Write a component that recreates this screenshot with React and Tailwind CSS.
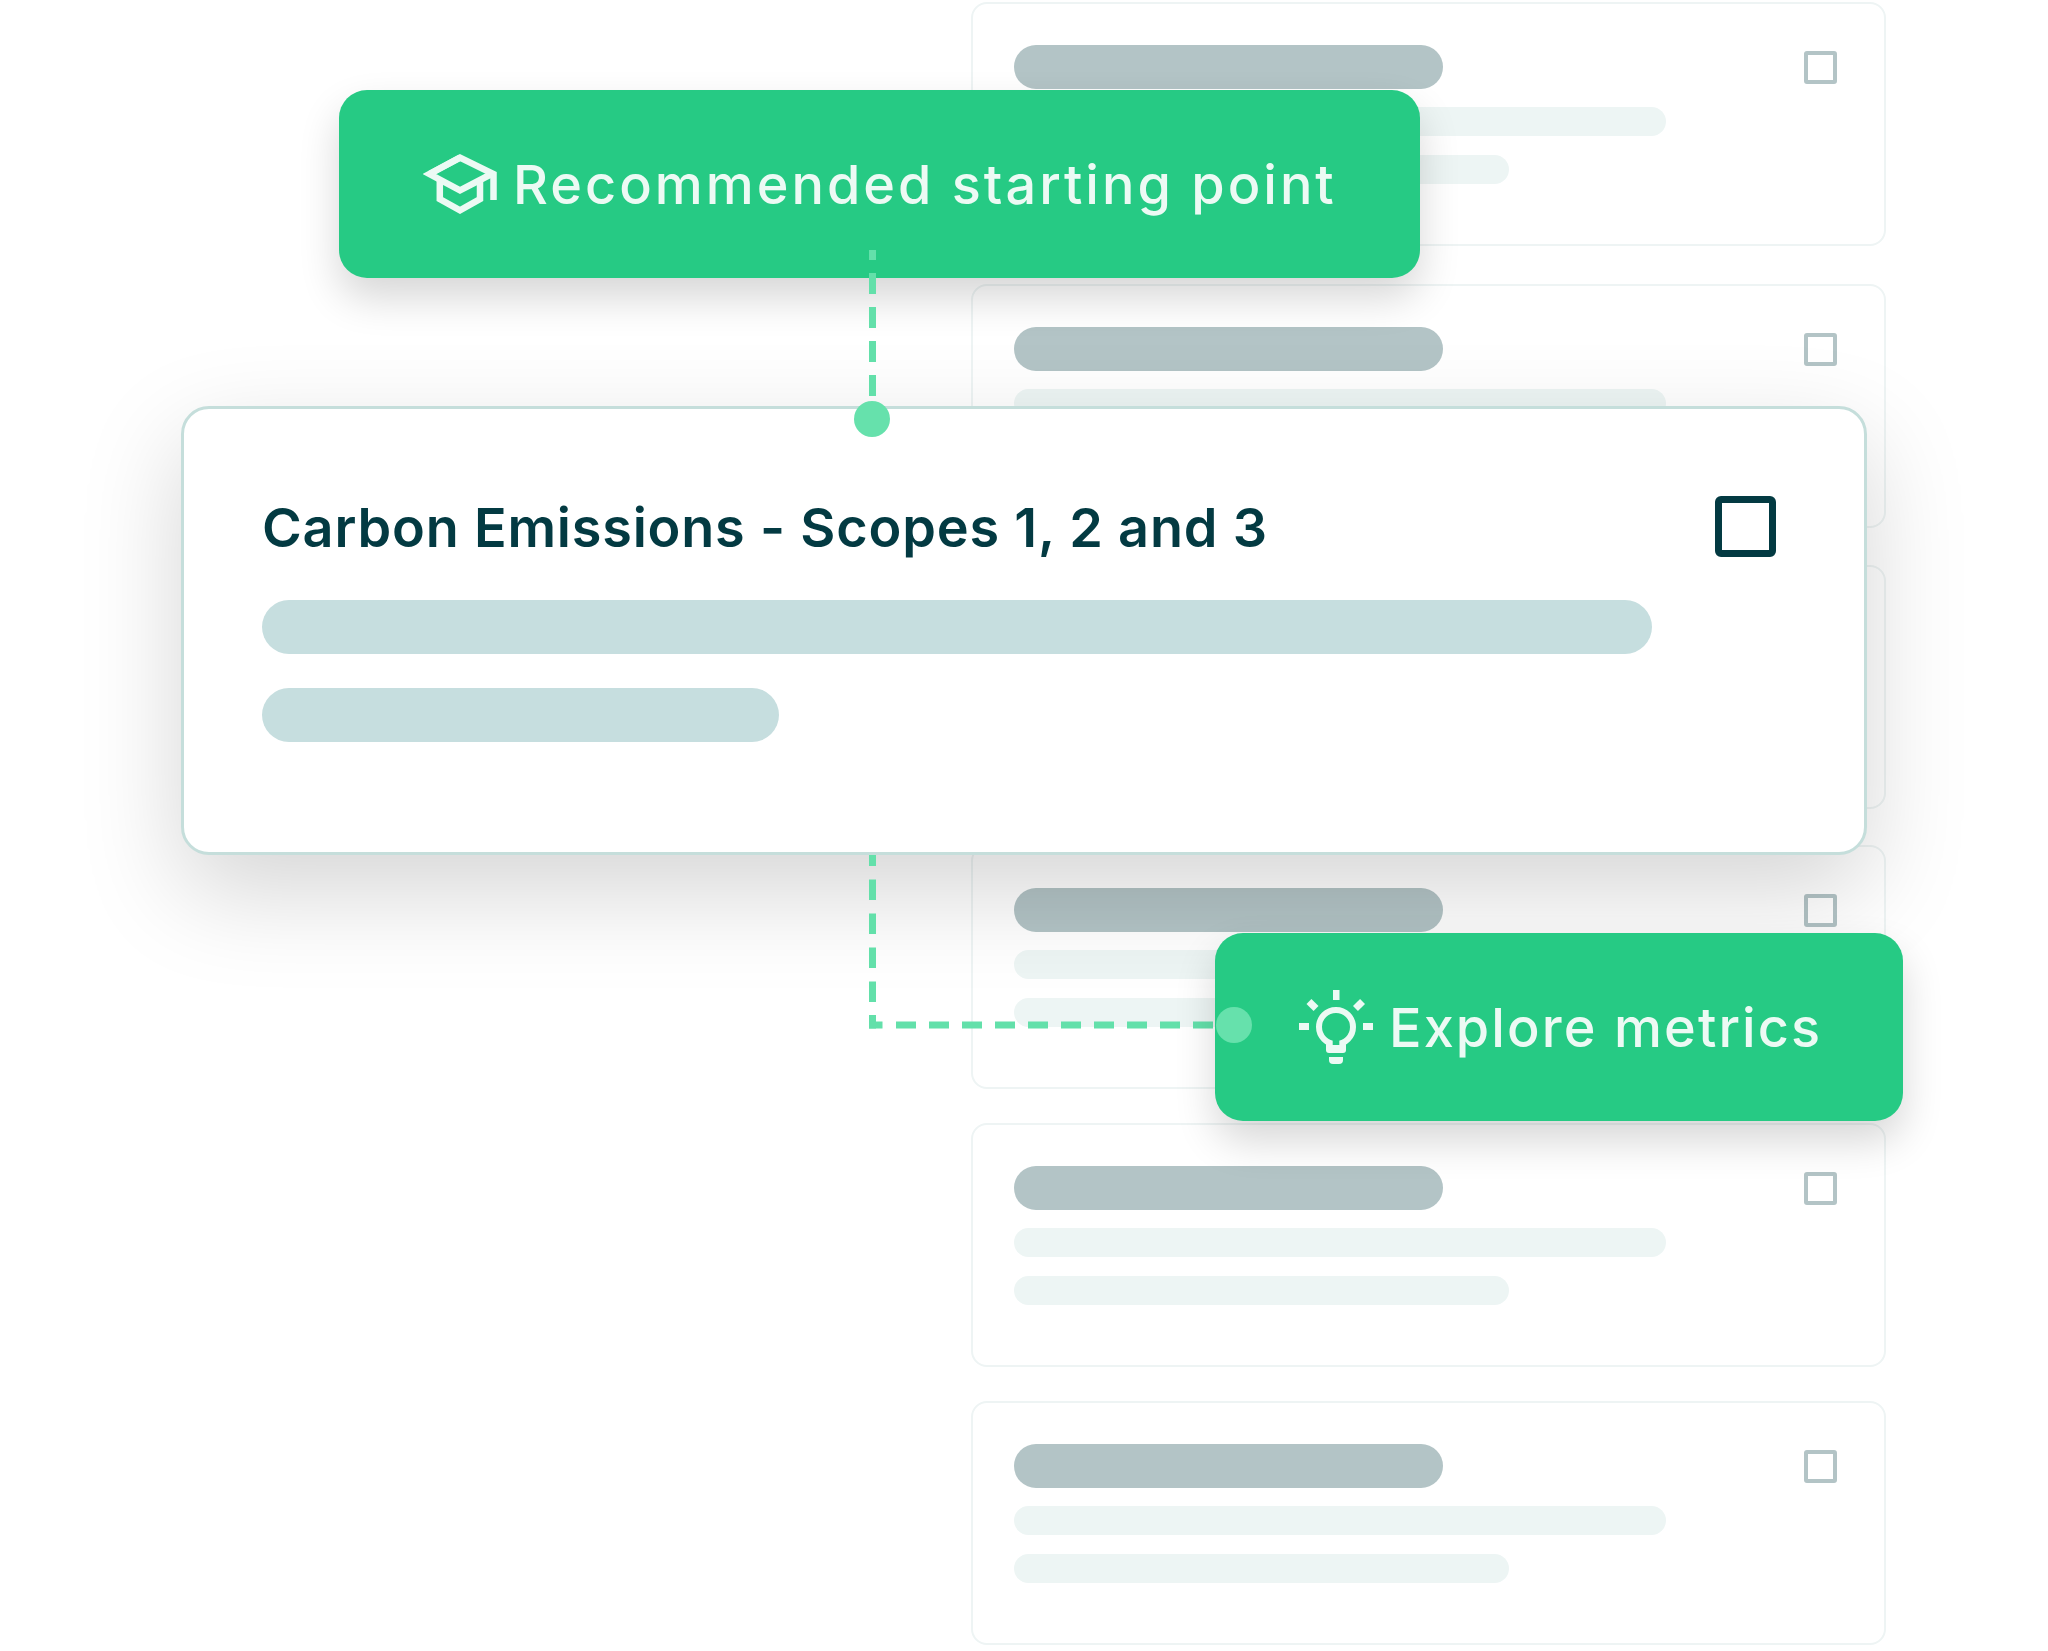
import React from 'react';

const SideCard = ({ className }) => (
  <div className={`h-[244px] rounded-[16px] border-2 border-[#eef4f4] bg-white pl-[41px] pr-[47px] pt-[41px] ${className}`}>
    <div className="flex items-start justify-between">
      <div className="h-[44px] w-[429px] rounded-full bg-[#b3c4c6]" />
      <div className="mt-[6px] h-[33px] w-[33px] rounded-[3px] border-4 border-[#b3c4c6]" />
    </div>
    <div className="mt-[18px] h-[29px] w-[652px] rounded-full bg-[#edf5f4]" />
    <div className="mt-[19px] h-[29px] w-[495px] rounded-full bg-[#edf5f4]" />
  </div>
);

const CapIcon = () => (
  <svg width="74" height="60" viewBox="0 0 74 60" fill="none" stroke="#ecfaf4" strokeWidth="6.5" className="shrink-0">
    <path d="M37 3.7 L6.5 20 L37 36.3 L70.5 19" />
    <path d="M6.5 20 L37 3.7 L70.5 20 V46" />
    <path d="M16.8 27 V45 L37 56.3 L57 45 V27" />
  </svg>
);

const BulbIcon = () => (
  <svg width="74" height="74" viewBox="0 0 74 74" className="shrink-0">
    <g fill="#ecfaf4">
      <rect x="34" y="0" width="6.5" height="10" />
      <rect x="0" y="33" width="10" height="7" />
      <rect x="64" y="33" width="10" height="7" />
      <rect x="10" y="10" width="7" height="10" transform="rotate(-45 13.5 15)" />
      <rect x="56.5" y="10" width="7" height="10" transform="rotate(45 60 15)" />
      <rect x="27" y="52" width="20" height="11" rx="3" />
      <path d="M30 67 H44 V70 A4 4 0 0 1 40 74 H34 A4 4 0 0 1 30 70 Z" />
    </g>
    <circle cx="37" cy="37" r="17" fill="none" stroke="#ecfaf4" strokeWidth="6" />
    <rect x="33.7" y="50" width="6.6" height="5" fill="#26ca84" />
  </svg>
);

export default function App() {
  return (
    <div className="relative h-[1651px] w-[2048px] overflow-hidden bg-white font-['Inter',sans-serif]">
      {/* stack of faded cards behind */}
      <div className="ml-[971px] flex w-[915px] flex-col pt-[2px]">
        <SideCard />
        <SideCard className="mt-[38px]" />
        <SideCard className="mt-[37px]" />
        <SideCard className="mt-[36px]" />
        <SideCard className="mt-[34px]" />
        <SideCard className="mt-[34px]" />
      </div>

      <div className="absolute left-[181px] top-[406px] h-[449px] w-[1686px] rounded-[28px] border-[3px] border-[#c5dedb] bg-white pl-[78px] pr-[88px] pt-[87px] shadow-[0_36px_100px_rgba(0,0,0,0.17)]">
        <div className="flex items-center justify-between">
          <span className="whitespace-nowrap pt-[2px] text-[54px] font-semibold leading-[59px] tracking-[0.8px] text-[#033a42]">
            Carbon Emissions - Scopes 1, 2 and 3
          </span>
          <div className="h-[61px] w-[61px] rounded-[6px] border-[7px] border-[#033a42]" />
        </div>
        <div className="mt-[43px] h-[54px] w-[1390px] rounded-full bg-[#c6dedf]" />
        <div className="mt-[34px] h-[54px] w-[517px] rounded-full bg-[#c6dedf]" />
      </div>

      {/* lower connector goes over the card's shadow, under the second pill */}
      <svg className="absolute left-0 top-0" width="2048" height="1651" fill="none" stroke="#63e0aa" strokeWidth="7">
        <path d="M872.5 1028.5 V855" strokeDasharray="13.5 13 20.5 13.5 20.5 13.5 20.5 13.5 20.5 13.5 20.5" />
        <path d="M869 1025 H882.5 M896 1025 H1215" strokeDasharray="20 13" />
      </svg>

      <div className="absolute left-[339px] top-[90px] flex h-[188px] w-[1081px] items-center gap-[16px] rounded-[28px] bg-[#26ca84] pl-[84px] shadow-[0_20px_40px_rgba(0,0,0,0.16)]">
        <CapIcon />
        <span className="whitespace-nowrap pt-[2px] text-[54px] font-medium leading-none tracking-[3px] text-[#ecfaf4]">
          Recommended starting point
        </span>
      </div>

      <div className="absolute left-[1215px] top-[933px] flex h-[188px] w-[688px] items-center gap-[16px] rounded-[28px] bg-[#26ca84] pl-[84px] shadow-[0_20px_40px_rgba(0,0,0,0.16)]">
        <BulbIcon />
        <span className="whitespace-nowrap pt-[2px] text-[54px] font-medium leading-none tracking-[2.1px] text-[#ecfaf4]">
          Explore metrics
        </span>
      </div>

      {/* upper connector sits on top of the first pill and the card edge */}
      <svg className="absolute left-0 top-0" width="2048" height="1651" fill="none" stroke="#63e0aa" strokeWidth="7">
        <path d="M872.5 250 V396" strokeDasharray="10 13 21 13 21 13 21 13 21" />
      </svg>
      <div className="absolute left-[854px] top-[401px] h-[36px] w-[36px] rounded-full bg-[#66e1ac]" />
      <div className="absolute left-[1215.5px] top-[1007px] h-[36px] w-[36px] rounded-full bg-[#66e1ac]" />
    </div>
  );
}
